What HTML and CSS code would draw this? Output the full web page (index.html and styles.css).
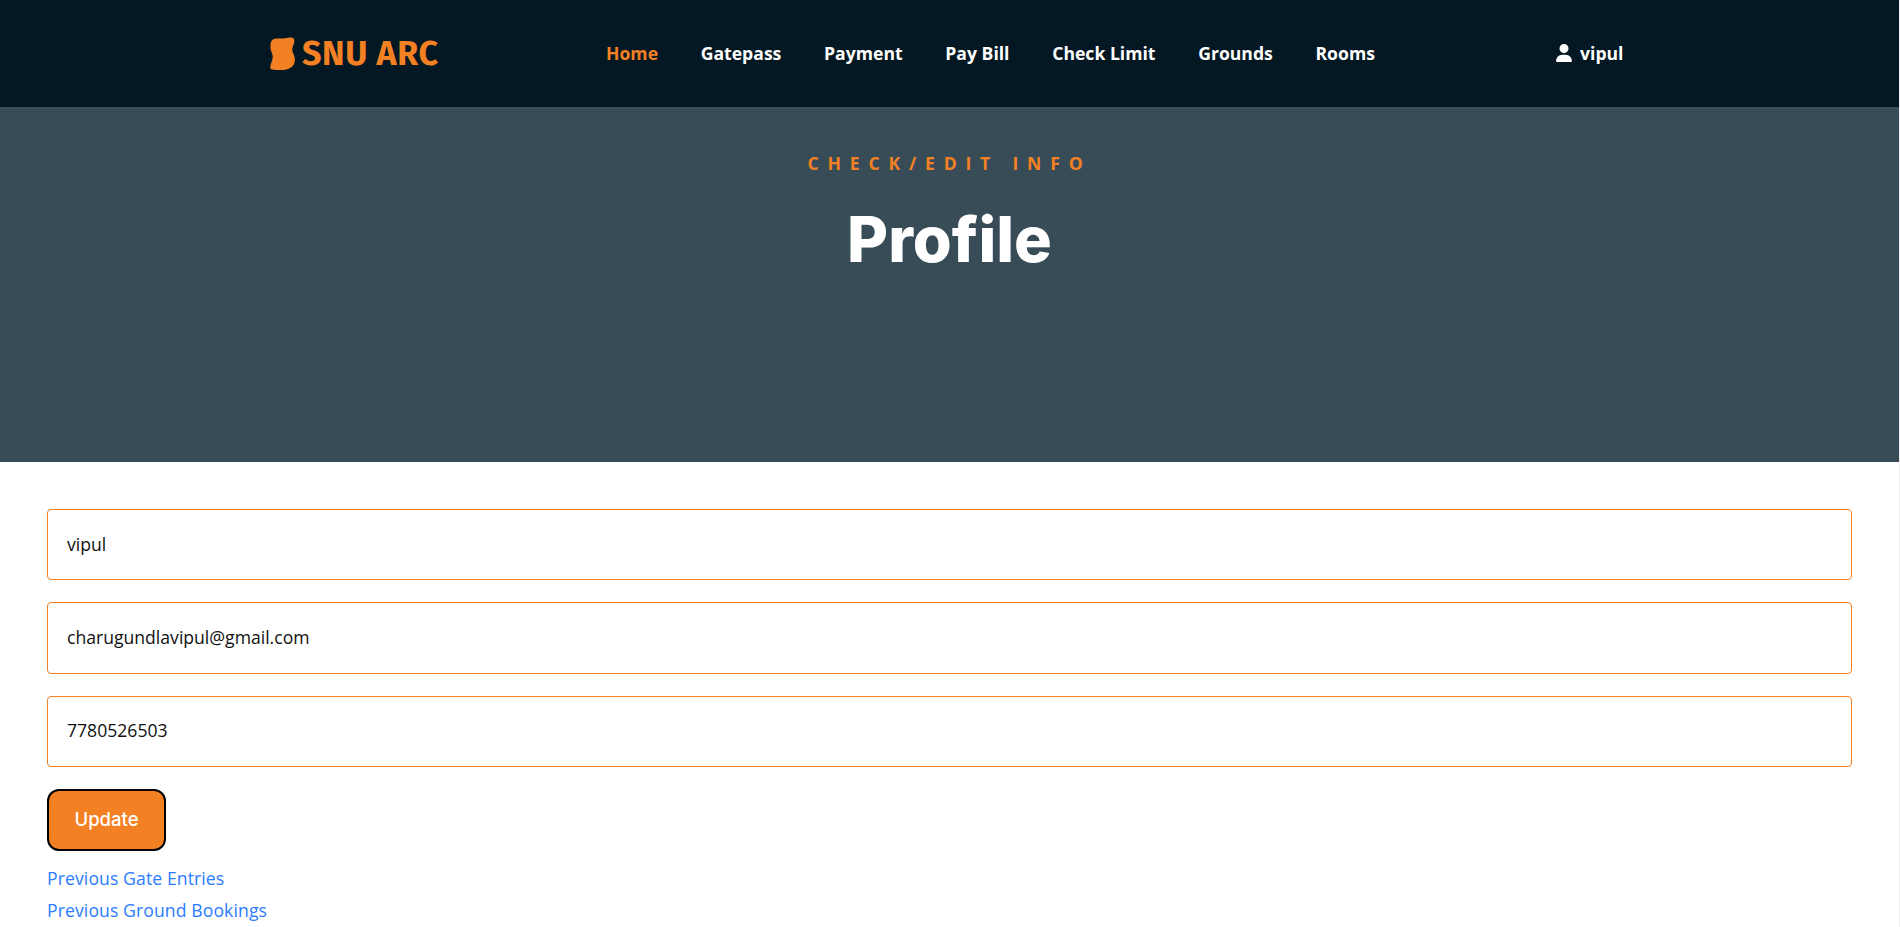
FILE: index.html
```html
<!DOCTYPE html>
<html lang="en">
<head>
<meta charset="utf-8">
<title>Profile - SNU ARC</title>
<link rel="stylesheet" href="styles.css">
</head>
<body>
<header class="topbar">
  <a class="brand" href="#">
    <svg class="brand-mark" viewBox="0 0 26 33" aria-hidden="true"><path d="M2 3C6 .5 9 2 13 1.500C16 1.200 20-.3 22.500.8C25 2 24.500 6 23 9C22 11.500 22 13.500 23 16C24.500 19 25.500 22 24.500 25.500C23.500 30 19 32.500 13 33C9 33.300 5 33 2 32.500C-.2 32 0 30 .8 27.500C1.800 24 3 21.500 2.700 19C2.300 16 .4 13.500 .4 10C.4 7.500 .8 5 2 3Z"/></svg>
    <span class="brand-text">SNU ARC</span>
  </a>
  <nav class="nav">
    <a class="nav-link is-active" href="#">Home</a>
    <a class="nav-link" href="#">Gatepass</a>
    <a class="nav-link" href="#">Payment</a>
    <a class="nav-link" href="#">Pay Bill</a>
    <a class="nav-link" href="#">Check Limit</a>
    <a class="nav-link" href="#">Grounds</a>
    <a class="nav-link" href="#">Rooms</a>
  </nav>
  <a class="user" href="#">
    <svg class="user-icon" viewBox="0 0 448 512" aria-hidden="true"><path d="M224 256a128 128 0 1 0 0-256 128 128 0 1 0 0 256zm-45.700 48C79.800 304 0 383.800 0 482.300 0 498.700 13.300 512 29.700 512h388.600c16.400 0 29.700-13.300 29.700-29.700C448 383.800 368.200 304 269.700 304h-91.400z"/></svg>
    <span>vipul</span>
  </a>
</header>
<section class="hero">
  <p class="eyebrow">CHECK/EDIT INFO</p>
  <h1 class="hero-title">Profile</h1>
</section>
<main class="content">
  <form class="profile-form">
    <input class="field" type="text" value="vipul">
    <input class="field" type="text" value="charugundlavipul@gmail.com">
    <input class="field" type="text" value="7780526503">
    <button class="update" type="button">Update</button>
  </form>
  <a class="history" href="#">Previous Gate Entries</a>
  <a class="history" href="#">Previous Ground Bookings</a>
</main>
</body>
</html>
```
FILE: styles.css
```css
* { box-sizing: border-box; }
html, body { margin: 0; height: 927px; overflow: hidden; }
html { background: #f1f1f1; }
body { width: 1899px; background: #fff; font-family: "Open Sans", sans-serif; color: #212529; }
a { text-decoration: none; }

.topbar { height: 107px; background: #041823; display: flex; align-items: center; padding-left: 270px; }
.brand { display: flex; align-items: center; gap: 6px; width: 336px; color: #f48024; }
.brand-mark { width: 26px; height: 33px; fill: #f48024; }
.brand-text { font: 700 34px/1 "Fira Sans", "Noto Sans", sans-serif; letter-spacing: .6px; }
.nav { display: flex; gap: 42.7px; width: 950px; padding-bottom: 2px; }
.nav-link { color: #fff; font-size: 17.6px; font-weight: 700; line-height: 24px; }
.nav-link.is-active { color: #f48024; }
.user { display: flex; align-items: center; gap: 8px; color: #fff; font-size: 17.6px; font-weight: 700; padding-bottom: 2px; }
.user-icon { width: 16px; height: 18px; fill: #fff; }

.hero { height: 355px; background: #384c57; text-align: center; padding-top: 44px; }
.eyebrow { margin: 0; color: #f48024; font-size: 17.6px; font-weight: 700; letter-spacing: 8.8px; line-height: 24px; }
.hero-title { margin: 26px 0 0; color: #fff; font: 800 63px/77px Inter, sans-serif; }

.content { padding: 47px 47px 0; }
.profile-form { display: flex; flex-direction: column; align-items: flex-start; gap: 22px; }
.field { width: 1805px; height: 71.3px; padding: 0 19px 2px; border: 1px solid #f48024; border-radius: 4px; background: #fff; color: #111; font: 400 17.6px "Open Sans", sans-serif; }
.update { width: 119px; height: 62px; padding: 0 0 2px; border: 2px solid #000; border-radius: 12px; background: #f48024; color: #fff; font: 500 18.5px Inter, sans-serif; }
.history { display: block; color: #2b7cff; font-size: 17.6px; line-height: 32px; letter-spacing: .1px; }
.profile-form + .history { margin-top: 11px; }
```
